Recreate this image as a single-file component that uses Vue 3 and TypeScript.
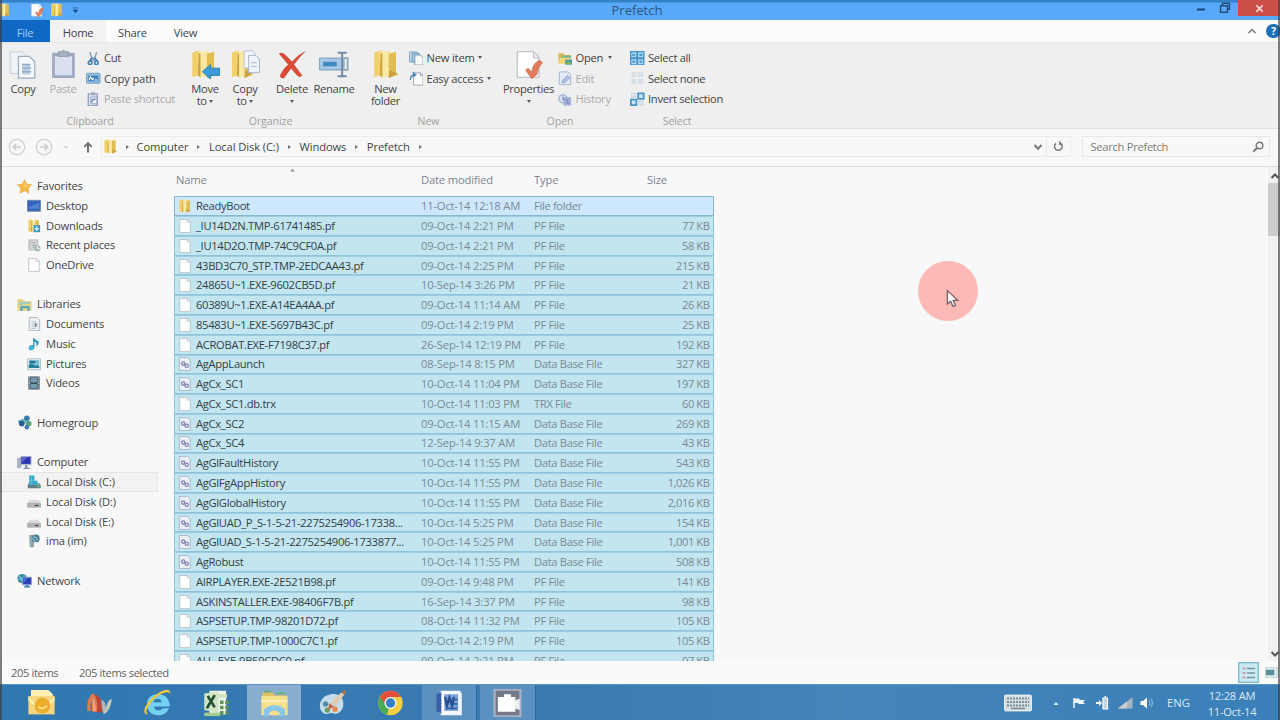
<script setup lang="ts">
interface FileRow {
  name: string
  date: string
  type: string
  size: string
  icon: string
}
interface SideItem {
  label: string
  icon: string
  level: number
  selected?: boolean
}
interface TaskItem {
  icon: string
  state?: string
}

const folder =
  '<path d="M2 3 10 0v27l-8 3z" fill="#f1cf69"/><path d="M8 2 20 1v27l-9 3-3-3z" fill="#fae9a4"/><path d="M18 4 26 2v23l3 2-11 4z" fill="#e3bd50"/><path d="M9 3 11 4v26l-3-2z" fill="#d0a63c"/><path d="m19 22 9 4-10 5z" fill="#c9a140"/>'

const icons: Record<string, string> = {
  folder: `<g transform="translate(1 0)">${folder}</g>`,
  page: '<path d="M4 1h17l7 6v24H4z" fill="#fff" stroke="#b3bcc5" stroke-width="1.800"/><path d="M21 1v6h7" fill="#eef1f6" stroke="#aab4be" stroke-width="1.400"/>',
  db: '<path d="M3 1h19l6 6v24H3z" fill="#eaf0f8" stroke="#9fabc0" stroke-width="1.800"/><g fill="none" stroke="#8683ad" stroke-width="3"><circle cx="12" cy="15" r="3.800"/><circle cx="20" cy="20" r="3.800"/></g>',
  copy: '<path d="M2 2h13l5 5v19H2z" fill="#eef3f8" stroke="#c2cdd8"/><path d="M11 7h12l6 6v18H11z" fill="#f5f8fc" stroke="#9aabbe" stroke-width="1.300"/><path d="M15 16h9v11h-9z" fill="#bdd1e3"/><path d="M15 16h9M15 20h10M15 24h10" stroke="#8fadc8" stroke-width="1.600"/>',
  paste: '<rect x="4" y="3" width="25" height="28" rx="1" fill="#9ea9c0"/><rect x="7" y="7" width="19" height="21" fill="#d9e0f0"/><path d="M11 2h3q2-3 5 0h3v5H11z" fill="#a7b2c6" stroke="#8996ab"/>',
  cut: '<path d="M9 2q0 9 10 20M23 2q0 9-10 20" stroke="#7f99b2" stroke-width="3" fill="none"/><path d="M13 15 8 23M19 15l6 8" stroke="#3f7fb6" stroke-width="4"/><circle cx="9" cy="26" r="4" fill="none" stroke="#3f7fb6" stroke-width="3.500"/><circle cx="23" cy="26" r="4" fill="none" stroke="#3f7fb6" stroke-width="3.500"/>',
  path: '<rect x="1" y="5" width="30" height="22" rx="2" fill="#9dbfe0" stroke="#6c9bc5" stroke-width="2"/><path d="M5 10h22v13H5z" fill="#4285bd"/><path d="m7 20 3-7 4 6 3-3M19 20h6" stroke="#fff" stroke-width="2.400" fill="none"/>',
  shortcut: '<path d="M5 4h20v26H5z" fill="#dde4ee" stroke="#94a2bd" stroke-width="3"/><path d="M11 1h9v6h-9z" fill="#98a6c2"/><path d="M11 11h13v15H11z" fill="#eef3fb" stroke="#909ebd" stroke-width="2"/><path d="M13 23q0-8 8-7" stroke="#5e82b3" stroke-width="3" fill="none"/>',
  moveto: `${folder}<path d="m13 24 9-8v4h10v8H22v4z" fill="#3c9bdb" stroke="#2c7fb8"/>`,
  copyto: `<g transform="scale(.86 1)">${folder}</g><path d="M15 1h9l3 3v16H15z" fill="#f2f5fb" stroke="#b2bccd"/><path d="M20 6h8l4 4v15H20z" fill="#eff4fa" stroke="#a4b2c6"/><path d="M23 14h6M23 18h6" stroke="#9ab0cb"/>`,
  delete: '<path d="M2 4q3-2 6 1l8 8Q22 6 30 2q-7 7-12 14l9 12q-3 3-6-1l-6-7q-4 5-8 11-4 0-4-3 3-7 9-12z" fill="#dd4b38" stroke="#c03d2e" stroke-width=".6"/>',
  rename: '<rect x="0" y="9" width="27" height="13" rx="1" fill="#a6c9e7" stroke="#84a5c8" stroke-width="1.400"/><path d="M4 13h15v5H4z" fill="#4288be"/><path d="M20 3h4l1 1 1-1h4M25 4v24M20 29h4l1-1 1 1h4" stroke="#728aa8" stroke-width="2.200" fill="none"/><path d="M27 9h4v13h-4" stroke="#91a3ba" fill="none" stroke-width="2"/>',
  newitem: '<path d="M1 2h17l5 5v17H1z" fill="#bad6e7" stroke="#7ca3bb" stroke-width="2"/><path d="M7 5h14v20H7z" fill="#9cc7df" stroke="#709eb9" stroke-width="2"/><path d="M13 9h12l6 6v16H13z" fill="#f7fafc" stroke="#8398aa" stroke-width="2"/>',
  easy: '<path d="M10 4h15l6 5v22H10z" fill="#fff" stroke="#9aa5af" stroke-width="2"/><path d="M25 4v6h5" fill="none" stroke="#8b98a4" stroke-width="2"/><path d="M3 20q0-12 10-12M8 3l7 5-7 5" fill="none" stroke="#4b8ab5" stroke-width="3"/>',
  props: '<path d="M3 2h18l6 6v22H3z" fill="#fff" stroke="#b4b8c2" stroke-width="1.200"/><path d="M21 2v7h6" fill="#eee" stroke="#b4b8c2"/><path d="m12 22 3-2 4 4q1-10 9-13l3 3q-5 5-6 13l-6 5z" fill="#e07b5a" stroke="#cb6c4e" stroke-width=".5"/>',
  open: '<path d="M1 5h11l3 4h14v18H1z" fill="#dbb957"/><path d="M8 10h21v12H8z" fill="#78b696"/><path d="M1 28 5 15h24l2 13z" fill="#f5d777"/><path d="M16 19h15v11H16z" fill="#4c95af"/><path d="m16 27 7-5 8 7H16z" fill="#79b966"/>',
  edit: '<path d="M3 2h19l6 6v22H3z" fill="#e3e9f5" stroke="#a2b1cf" stroke-width="2"/><path d="m10 21 11-11 5 5-11 11H9z" fill="#afc2e1" stroke="#8ba5ca" stroke-width="2"/>',
  history: '<circle cx="11" cy="15" r="9" fill="#dce3f2" stroke="#a9b5d7" stroke-width="3"/><path d="M12 11h17v19H12z" fill="#a4b3d9"/><path d="M11 10v7h6M20 16v8h5" fill="none" stroke="#7389bd" stroke-width="2.500"/>',
  selall: '<rect width="32" height="32" fill="#4591ca"/><path d="M3 3h11v11H3zM18 3h11v11H18zM3 18h11v11H3zM18 18h11v11H18z" fill="#b1d8f2"/><path d="M5 6h6v5H5zM21 6h6v5h-6zM5 21h6v5H5zM21 21h6v5h-6z" fill="#4e99d0"/>',
  selnone: '<path d="M4 3h9v9H4zM19 3h9v9h-9zM4 19h9v9H4zM19 19h9v9h-9z" fill="#dce2ec" stroke="#c6cfdc" stroke-width="2" stroke-dasharray="2 2"/>',
  invert: '<path d="M2 17h12v12H2zM18 3h12v12H18z" fill="#cae6f7" stroke="#4c95cb" stroke-width="4"/><path d="M3 3h9v9H3zM20 20h9v9h-9z" fill="#dce8f3" stroke="#b5cadb" stroke-width="1.500"/>',
  star: '<path d="m16 1 4.700 9.800 10.800 1.400-7.800 7.500 1.900 10.700L16 25.200l-9.600 5.200 1.900-10.700L.5 12.200l10.800-1.400z" fill="#f7b943" stroke="#df9c37"/><path d="m16 5 3 8 7 1-10 4z" fill="#fbd179"/>',
  desktop: '<path d="M1 3h30v25H1z" fill="#3567b2" stroke="#6887ae" stroke-width="2"/><path d="M4 6h24v16H4z" fill="#3864c1"/><path d="m4 18 24-9v13H4z" fill="#5282d1"/>',
  downloads: `<g transform="translate(1 0)">${folder}</g><path d="M15 14h15v16H15z" fill="#3595c6"/><path d="M22 16v9m-4-4 4 5 5-5" stroke="#c9edff" stroke-width="3" fill="none"/>`,
  recent: '<path d="M3 3h23v25H3z" fill="#c3c9cb"/><path d="m6 7 16-3 4 21-17 4z" fill="#dededc" stroke="#aaa"/><path d="M9 11h11M11 17h12M13 22h11" stroke="#8f989a" stroke-width="2"/><circle cx="24" cy="24" r="7" fill="#a9b9bc"/><path d="M24 19v5h5" stroke="#fff" stroke-width="2" fill="none"/>',
  libraries: '<path d="M1 5h11l3 4h16v20H1z" fill="#e3cf77"/><path d="M4 11h25v13H4z" fill="#9fcac4"/><path d="m2 18 28-4v15H2z" fill="#ead77e"/><path d="M7 19h20v11h-5v-6H12v6H7z" fill="#5ca7be"/>',
  document: '<path d="M5 1h18l6 6v24H5z" fill="#eef1f4" stroke="#a6afb8" stroke-width="2"/><path d="M10 11h12M10 16h14M10 21h14M10 26h10" stroke="#9da8b3" stroke-width="1.500"/><path d="m18 13 6 5-6 6z" fill="#7886a0"/>',
  music: '<path d="M16 2q3 6 11 8-1 9-6 11 3-8-4-10v14q-3 7-11 5-5-5 1-10 4-3 7-1V2z" fill="#2c94c7"/><ellipse cx="10" cy="25" rx="6" ry="4" fill="#4eb5dc"/>',
  pictures: '<path d="M1 4h30v25H1z" fill="#e6eff1" stroke="#92a9b5" stroke-width="1.500"/><path d="M4 7h24v18H4z" fill="#78bed3"/><path d="M4 19q7-8 12 0l12 1v5H4z" fill="#287c98"/><path d="M6 9h13v5H6z" fill="#34698f"/>',
  videos: '<path d="M3 1h26v30H3z" fill="#4f6475"/><path d="M9 4h14v24H9z" fill="#789caf"/><path d="M9 15h14v3H9z" fill="#293f51"/><path d="M6 3v26M26 3v26" stroke="#b6c6ce" stroke-width="2.500" stroke-dasharray="3 3"/>',
  homegroup: '<circle cx="21" cy="7" r="6" fill="#397bab"/><path d="M1 13 13 8l7 7-8 10z" fill="#62aab6"/><circle cx="10" cy="18" r="6" fill="#265d9d"/><circle cx="25" cy="18" r="6" fill="#54a375"/><circle cx="21" cy="26" r="5" fill="#4179b7"/>',
  computer: '<path d="M7 2h24v20H7z" fill="#b4bad0"/><path d="M9 4h20v15H9z" fill="#2e35b5"/><path d="m9 4 14 0-14 13z" fill="#5f68c9"/><path d="M1 7h7v20H1z" fill="#a9b6c5" stroke="#7786a1"/><path d="M17 22h5v5h5v3H14v-3h3z" fill="#7b8cad"/>',
  diskc: '<path d="M3 18h25l3 5v7H2v-7z" fill="#829fa6"/><path d="M2 23h29v7H2z" fill="#627d84"/><path d="M5 1h12v12h7v9H5z" fill="#35a9cc"/><path d="M10 2v20M5 12h12" stroke="#93dbea"/><circle cx="26" cy="26" r="2" fill="#5fe386"/>',
  disk: '<path d="M6 11h21l4 8v9H1v-9z" fill="#dcdcdc"/><path d="M1 19h30v9H1z" fill="#b3b6b8" stroke="#94989b"/><path d="M18 24h8" stroke="#444" stroke-width="3"/>',
  ima: '<path d="M5 2h16v7q-5 1-5 7v13q-6 4-10-1z" fill="#91a6b1"/><circle cx="20" cy="10" r="9" fill="#4e8397"/><path d="M15 6q7 0 9 8M12 10q6 2 6 8" stroke="#b2dae3" stroke-width="2" fill="none"/>',
  network: '<circle cx="11" cy="12" r="10" fill="#348ba7"/><path d="M4 7q6 1 7 13M3 14l16-5" stroke="#75cfda" stroke-width="2.500" fill="none"/><path d="M12 9h19v16H12z" fill="#2e41b5" stroke="#8fa2d3" stroke-width="2"/><path d="M14 11h9l-9 10z" fill="#4c77d6"/><path d="M18 26h7v2h3v3H15v-3h3z" fill="#3a7bb3"/>',
  outlook: '<path d="M4 1h20l5 5v21H4z" fill="#fff0b3"/><path d="M1 8h30v21H1z" fill="#f5d67c"/><path d="m1 9 15 13L31 9v4L16 26 1 13z" fill="#fff1ad"/><circle cx="17" cy="19" r="9" fill="#ecae2d"/><path d="M12 20q5 5 10-1" fill="none" stroke="#fce089" stroke-width="2"/>',
  aimp: '<path d="M2 25Q1 10 8 5q6 1 7 20-6 3-7 0-1-8-1-13-2 7-1 13z" fill="#df7a55"/><path d="M10 6q10 2 9 20l-6 1q2-13-3-21z" fill="#bd4534"/><path d="M8 9q4 6 4 16H8z" fill="#e9a27f"/><path d="M18 12q5 2 5 9 2-9 7-10-1 14-9 18-3-7-3-17z" fill="#a9b9bd"/><path d="M21 27q6-6 8-14" stroke="#d9d2a6" stroke-width="1.500" fill="none"/>',
  ie: '<path d="M16 6C7 6 4 12 4 18c0 7 5 12 13 12 6 0 10-3 12-8h-7c-2 3-9 4-10-2h18C30 11 25 6 16 6zm-5 9c1-5 9-5 10 0z" fill="#73d2f4"/><path d="M3 29C-4 24 8 10 18 4c8-5 13-4 13 2-3-6-15 1-21 8C5 20 1 26 5 28z" fill="#edc73d"/>',
  excel: '<path d="M8 2h19v27H8z" fill="#eef7e7"/><path d="M18 6h10v4H18z" fill="#cfe3c1"/><path d="M20 13h4v4h-4zM26 13h4v4h-4zM20 19h4v4h-4zM26 19h4v4h-4zM20 25h4v4h-4zM26 25h4v4h-4z" fill="#5f9457"/><path d="M2 5 18 3v24L2 24z" fill="#cfe5c6"/><path d="m6 8 8 13m0-14L5 22" stroke="#244f32" stroke-width="3"/><path d="M2 27h18v4H2z" fill="#a4cb90"/>',
  explorer: '<path d="M2 4h12l2 3h14v20H2z" fill="#dfc066"/><path d="M4 3h8M19 5h9" stroke="#66af73" stroke-width="2"/><path d="M1 8h30v22H1z" fill="#f6df8d"/><path d="M1 13h30v2H1z" fill="#fdf0b8"/><path d="M4 31v-8q12-9 24 0v8h-6v-4q-6-5-12 0v4z" fill="#87c7e7"/>',
  paint: '<path d="M14 6C2 8-2 21 5 27c5 4 8-1 12 1 7 2 13-6 11-14C27 8 21 5 14 6z" fill="#c6dceb"/><circle cx="8" cy="17" r="3" fill="#4b8eaf"/><circle cx="10" cy="24" r="3" fill="#58a56c"/><circle cx="19" cy="23" r="3" fill="#e58548"/><path d="m14 15 12-11 4 2-11 14z" fill="#e0cbb5"/><path d="m26 4 3-3 3 2-2 4z" fill="#a0745c"/><path d="m12 16 6 4-7 4z" fill="#c06a4a"/>',
  chrome: '<circle cx="16" cy="16" r="14" fill="#f5cf43"/><path d="m16 16-4 13.500A14 14 0 0 1 4 9z" fill="#4bac55"/><path d="M4 9 12 20l-2-5q1-6 6-6h12.200Q24 2 16 2 8 2 4 9z" fill="#e54d3c"/><circle cx="16" cy="16" r="7" fill="#e9f3f4"/><circle cx="16" cy="16" r="5.300" fill="#367fc4"/>',
  word: '<path d="M6 2h22l2 3v25H6z" fill="#f3f8ff"/><path d="M9 6h17v19H9z" fill="#7ea3d6"/><path d="M1 6 7 4v24l-6-3z" fill="#3a5fa6"/><path d="M7 3h3v26H7z" fill="#fff"/><path d="m11 9 2 10 3-9 3 9 2-10" stroke="#294e91" stroke-width="2.800" fill="none"/><path d="M19 12h6M20 17h5M12 22h13" stroke="#315f9b" stroke-width="2"/>',
  recorder: '<path d="M0 0h32v32H0z" fill="#a9b1c2"/><path d="M2.500 2h27v28h-27z" fill="#747989"/><path d="M5 9h7V6h8v3h5v17H5z" fill="#fff"/><path d="m24 13 6-2v13l-6-2z" fill="#eceff0"/>',
}

const sideItems: (SideItem | null)[] = [
  { label: 'Favorites', icon: 'star', level: 0 },
  { label: 'Desktop', icon: 'desktop', level: 1 },
  { label: 'Downloads', icon: 'downloads', level: 1 },
  { label: 'Recent places', icon: 'recent', level: 1 },
  { label: 'OneDrive', icon: 'page', level: 1 },
  null,
  { label: 'Libraries', icon: 'libraries', level: 0 },
  { label: 'Documents', icon: 'document', level: 1 },
  { label: 'Music', icon: 'music', level: 1 },
  { label: 'Pictures', icon: 'pictures', level: 1 },
  { label: 'Videos', icon: 'videos', level: 1 },
  null,
  { label: 'Homegroup', icon: 'homegroup', level: 0 },
  null,
  { label: 'Computer', icon: 'computer', level: 0 },
  { label: 'Local Disk (C:)', icon: 'diskc', level: 1, selected: true },
  { label: 'Local Disk (D:)', icon: 'disk', level: 1 },
  { label: 'Local Disk (E:)', icon: 'disk', level: 1 },
  { label: 'ima (im)', icon: 'ima', level: 1 },
  null,
  { label: 'Network', icon: 'network', level: 0 },
]

const row = (name: string, date: string, type: string, size: string): FileRow => ({
  name,
  date,
  type,
  size,
  icon: type === 'File folder' ? 'folder' : type === 'Data Base File' ? 'db' : 'page',
})
const PF = 'PF File'
const DB = 'Data Base File'
const files: FileRow[] = [
  row('ReadyBoot', '11-Oct-14 12:18 AM', 'File folder', ''),
  row('_IU14D2N.TMP-61741485.pf', '09-Oct-14 2:21 PM', PF, '77 KB'),
  row('_IU14D2O.TMP-74C9CF0A.pf', '09-Oct-14 2:21 PM', PF, '58 KB'),
  row('43BD3C70_STP.TMP-2EDCAA43.pf', '09-Oct-14 2:25 PM', PF, '215 KB'),
  row('24865U~1.EXE-9602CB5D.pf', '10-Sep-14 3:26 PM', PF, '21 KB'),
  row('60389U~1.EXE-A14EA4AA.pf', '09-Oct-14 11:14 AM', PF, '26 KB'),
  row('85483U~1.EXE-5697B43C.pf', '09-Oct-14 2:19 PM', PF, '25 KB'),
  row('ACROBAT.EXE-F7198C37.pf', '26-Sep-14 12:19 PM', PF, '192 KB'),
  row('AgAppLaunch', '08-Sep-14 8:15 PM', DB, '327 KB'),
  row('AgCx_SC1', '10-Oct-14 11:04 PM', DB, '197 KB'),
  row('AgCx_SC1.db.trx', '10-Oct-14 11:03 PM', 'TRX File', '60 KB'),
  row('AgCx_SC2', '09-Oct-14 11:15 AM', DB, '269 KB'),
  row('AgCx_SC4', '12-Sep-14 9:37 AM', DB, '43 KB'),
  row('AgGlFaultHistory', '10-Oct-14 11:55 PM', DB, '543 KB'),
  row('AgGlFgAppHistory', '10-Oct-14 11:55 PM', DB, '1,026 KB'),
  row('AgGlGlobalHistory', '10-Oct-14 11:55 PM', DB, '2,016 KB'),
  row('AgGlUAD_P_S-1-5-21-2275254906-17338...', '10-Oct-14 5:25 PM', DB, '154 KB'),
  row('AgGlUAD_S-1-5-21-2275254906-1733877...', '10-Oct-14 5:25 PM', DB, '1,001 KB'),
  row('AgRobust', '10-Oct-14 11:55 PM', DB, '508 KB'),
  row('AIRPLAYER.EXE-2E521B98.pf', '09-Oct-14 9:48 PM', PF, '141 KB'),
  row('ASKINSTALLER.EXE-98406F7B.pf', '16-Sep-14 3:37 PM', PF, '98 KB'),
  row('ASPSETUP.TMP-98201D72.pf', '08-Oct-14 11:32 PM', PF, '105 KB'),
  row('ASPSETUP.TMP-1000C7C1.pf', '09-Oct-14 2:19 PM', PF, '105 KB'),
  row('AU_.EXE-9B59CDC0.pf', '09-Oct-14 2:21 PM', PF, '97 KB'),
]

const crumbs = ['Computer', 'Local Disk (C:)', 'Windows', 'Prefetch']

const tasks: TaskItem[] = [
  { icon: 'outlook' },
  { icon: 'aimp' },
  { icon: 'ie' },
  { icon: 'excel' },
  { icon: 'explorer', state: 'active' },
  { icon: 'paint' },
  { icon: 'chrome' },
  { icon: 'word', state: 'open' },
  { icon: 'recorder', state: 'open' },
]
</script>

<template>
  <div class="screen">
    <header class="titlebar">
      <div class="quick">
        <svg class="q1" viewBox="0 0 32 32" v-html="icons.folder" />
        <svg class="q2" viewBox="0 0 32 32" v-html="icons.props" />
        <svg class="q3" viewBox="0 0 32 32" v-html="icons.folder" />
        <svg class="q4" viewBox="0 0 8 8"><path d="M1 1h6M1.500 3.500h5L4 6.500z" fill="#174d88" stroke="#174d88" stroke-width=".8" /></svg>
      </div>
      <div class="title">Prefetch</div>
      <div class="winbtns">
        <svg class="min" viewBox="0 0 10 10"><path d="M1 7.500h8" stroke="#174779" stroke-width="2" /></svg>
        <svg class="max" viewBox="0 0 12 12"><path d="M3.500 3V1.200h7v6H9M1.500 3.700h7v6.500h-7z" fill="none" stroke="#204b78" stroke-width="1.400" /></svg>
        <div class="close"><svg viewBox="0 0 10 10"><path d="m1.500 1.500 7 7m0-7-7 7" stroke="#f6dcda" stroke-width="1.700" /></svg></div>
      </div>
    </header>

    <nav class="tabs">
      <div class="tab file">File</div>
      <div class="tab home">Home</div>
      <div class="tab share">Share</div>
      <div class="tab view">View</div>
      <svg class="collapse" viewBox="0 0 10 8"><path d="M1.500 6 5 2.500 8.500 6" fill="none" stroke="#777" stroke-width="1.500" /></svg>
      <div class="help">?</div>
    </nav>

    <section class="ribbon">
      <div class="group clipboard">
        <div class="tools">
          <div class="big"><svg viewBox="0 0 32 32" v-html="icons.copy" /><span>Copy</span></div>
          <div class="big off"><svg viewBox="0 0 32 32" v-html="icons.paste" /><span>Paste</span></div>
          <div class="smalls">
            <div class="small"><svg viewBox="0 0 32 32" v-html="icons.cut" /><span>Cut</span></div>
            <div class="small path"><svg viewBox="0 0 32 32" v-html="icons.path" /><span>Copy path</span></div>
            <div class="small off"><svg viewBox="0 0 32 32" v-html="icons.shortcut" /><span>Paste shortcut</span></div>
          </div>
        </div>
        <div class="caption">Clipboard</div>
      </div>
      <div class="group organize">
        <div class="tools">
          <div class="big"><svg viewBox="0 0 32 32" v-html="icons.moveto" /><span>Move</span><span>to <i class="dd" /></span></div>
          <div class="big"><svg viewBox="0 0 32 32" v-html="icons.copyto" /><span>Copy</span><span>to <i class="dd" /></span></div>
          <div class="big del"><svg viewBox="0 0 32 32" v-html="icons.delete" /><span>Delete</span><span><i class="dd" /></span></div>
          <div class="big ren"><svg viewBox="0 0 32 32" v-html="icons.rename" /><span>Rename</span></div>
        </div>
        <div class="caption">Organize</div>
      </div>
      <div class="group new">
        <div class="tools">
          <div class="big"><svg viewBox="0 0 32 32" v-html="icons.folder" /><span>New</span><span>folder</span></div>
          <div class="smalls">
            <div class="small item"><svg viewBox="0 0 32 32" v-html="icons.newitem" /><span>New item</span><i class="dd" /></div>
            <div class="small"><svg viewBox="0 0 32 32" v-html="icons.easy" /><span>Easy access</span><i class="dd" /></div>
          </div>
        </div>
        <div class="caption">New</div>
      </div>
      <div class="group open">
        <div class="tools">
          <div class="big"><svg viewBox="0 0 32 32" v-html="icons.props" /><span>Properties</span><span><i class="dd" /></span></div>
          <div class="smalls">
            <div class="small"><svg viewBox="0 0 32 32" v-html="icons.open" /><span>Open</span><i class="dd wide" /></div>
            <div class="small off"><svg viewBox="0 0 32 32" v-html="icons.edit" /><span>Edit</span></div>
            <div class="small off"><svg viewBox="0 0 32 32" v-html="icons.history" /><span>History</span></div>
          </div>
        </div>
        <div class="caption">Open</div>
      </div>
      <div class="group select">
        <div class="tools">
          <div class="smalls">
            <div class="small"><svg viewBox="0 0 32 32" v-html="icons.selall" /><span>Select all</span></div>
            <div class="small"><svg viewBox="0 0 32 32" v-html="icons.selnone" /><span>Select none</span></div>
            <div class="small"><svg viewBox="0 0 32 32" v-html="icons.invert" /><span>Invert selection</span></div>
          </div>
        </div>
        <div class="caption">Select</div>
      </div>
    </section>

    <section class="address">
      <div class="arrows">
        <svg class="circ" viewBox="0 0 18 18"><circle cx="9" cy="9" r="7.700" fill="none" stroke="#d2d2d2" stroke-width="1.300" /><path d="M13 9H5.500M8.500 5.800 5.300 9l3.200 3.200" fill="none" stroke="#ccc" stroke-width="1.600" /></svg>
        <svg class="circ" viewBox="0 0 18 18"><circle cx="9" cy="9" r="7.700" fill="none" stroke="#d2d2d2" stroke-width="1.300" /><path d="M5 9h7.500M9.500 5.800 12.700 9l-3.200 3.200" fill="none" stroke="#ccc" stroke-width="1.600" /></svg>
        <svg class="hist" viewBox="0 0 6 6"><path d="M.5 2h5L3 4.500z" fill="#d0d0d0" /></svg>
        <svg class="up" viewBox="0 0 10 12"><path d="M5 11.500V2M1.300 5.800 5 2l3.700 3.800" fill="none" stroke="#6c6c6c" stroke-width="1.900" /></svg>
      </div>
      <div class="pathbox">
        <svg class="loc" viewBox="0 0 32 32" v-html="icons.folder" />
        <i class="sep first" />
        <template v-for="c in crumbs" :key="c">
          <span class="crumb">{{ c }}</span><i class="sep" />
        </template>
        <svg class="drop" viewBox="0 0 10 8"><path d="M1.500 2 5 5.700 8.500 2" fill="none" stroke="#777" stroke-width="2" /></svg>
        <div class="refresh"><svg viewBox="0 0 12 12"><path d="M8 2.300A4.200 4.200 0 1 1 3.300 2.600M7.400.3v3.200h3.200" fill="none" stroke="#777" stroke-width="1.500" /></svg></div>
      </div>
      <div class="search">
        <span>Search Prefetch</span>
        <svg viewBox="0 0 12 12"><circle cx="7.500" cy="4.500" r="3.300" fill="none" stroke="#777" stroke-width="1.400" /><path d="M5 7 1.300 10.700" stroke="#777" stroke-width="1.900" /></svg>
      </div>
    </section>

    <main class="body">
      <aside class="side">
        <div v-for="(s, i) in sideItems" :key="i" class="node" :class="{ child: s?.level === 1, sel: s?.selected }">
          <template v-if="s">
            <svg viewBox="0 0 32 32" v-html="icons[s.icon]" />
            <span>{{ s.label }}</span>
          </template>
        </div>
      </aside>
      <div class="list">
        <div class="head">
          <span class="c-name">Name</span>
          <span class="c-date">Date modified</span>
          <span class="c-type">Type</span>
          <span class="c-size">Size</span>
          <svg class="sort" viewBox="0 0 8 5"><path d="M1 4.500 4 1l3 3.500z" fill="#8b8f95" /></svg>
        </div>
        <div class="rows">
          <div v-for="(f, i) in files" :key="f.name" class="row" :class="{ focus: i === 0 }">
            <svg viewBox="0 0 32 32" v-html="icons[f.icon]" />
            <span class="name">{{ f.name }}</span>
            <span class="date">{{ f.date }}</span>
            <span class="type">{{ f.type }}</span>
            <span class="size">{{ f.size }}</span>
          </div>
        </div>
      </div>
      <div class="scroll">
        <svg viewBox="0 0 10 8"><path d="M1.500 6 5 2.500 8.500 6" fill="none" stroke="#555" stroke-width="2" /></svg>
        <div class="thumb" />
        <svg class="dn" viewBox="0 0 10 8"><path d="M1.500 2 5 5.500 8.500 2" fill="none" stroke="#555" stroke-width="2" /></svg>
      </div>
    </main>

    <footer class="status">
      <span class="count">205 items</span>
      <span class="chosen">205 items selected</span>
      <svg class="details" viewBox="0 0 21 21"><rect x=".7" y=".7" width="19.600" height="19.600" fill="#cbe9f2" stroke="#7fbccb" stroke-width="1.400" /><path d="M9 6.500h8M9 11h8M9 15.500h8" stroke="#7b929d" stroke-width="1.300" /><path d="M4.500 6.500h3M4.500 11h3M4.500 15.500h3" stroke="#c48a9a" stroke-width="1.600" /></svg>
      <svg class="thumbs" viewBox="0 0 14 12"><path d="M.5.500h13v11H.5z" fill="#dfecee" stroke="#bcd3d6" /><path d="M1 3h9v6H1z" fill="#5b8f98" /></svg>
    </footer>

    <footer class="taskbar">
      <div v-for="t in tasks" :key="t.icon" class="task" :class="t.state">
        <svg viewBox="0 0 32 32" v-html="icons[t.icon]" />
      </div>
      <div class="tray">
        <svg class="kb" viewBox="0 0 28 17"><rect x=".6" y=".6" width="26.800" height="15.800" rx="1" fill="#d6dde0" stroke="#edf3f6" /><path d="M3 4h22M3 7.500h22M3 11h22" stroke="#7b8f9b" stroke-width="2" stroke-dasharray="2 1" /><path d="M7 14h14" stroke="#7b8f9b" stroke-width="1.500" /></svg>
        <svg class="more" viewBox="0 0 8 6"><path d="M1.500 5 4 2l2.500 3z" fill="#d9edf9" /></svg>
        <svg class="flag" viewBox="0 0 14 14"><path d="M2 2v10" stroke="#fff" stroke-width="1.400" /><path d="M2 2.500h5l1 1.500h5l-2 2 2 2H7L6 7H2z" fill="#f1f6fa" /></svg>
        <svg class="power" viewBox="0 0 14 14"><path d="M8 2h4.500v11H8zM9.500.7H11" fill="#c3d2dc" stroke="#fff" stroke-width="1.200" /><path d="M1 6h3V4l3 3-3 3V8H1z" fill="#fff" /></svg>
        <svg class="signal" viewBox="0 0 15 12"><path d="M0 11.500 14.500 0v11.500z" fill="#a3b6c2" /><path d="M0 11.500 9 4.500v7z" fill="#c9cfd1" /></svg>
        <svg class="sound" viewBox="0 0 14 12"><path d="M.5 4H3l4-3.500v11L3 8H.5z" fill="#fff" /><path d="M9 3.500q2 2.500 0 5M11 2q3 4 0 8" fill="none" stroke="#8ab5d8" stroke-width="1.200" /></svg>
        <span class="lang">ENG</span>
        <div class="clock"><span>12:28 AM</span><span>11-Oct-14</span></div>
      </div>
    </footer>

    <div class="spot">
      <svg viewBox="0 0 14 20"><path d="M1.500 1.500v14.500l3.500-3 2.500 5.500 2.600-1.200-2.300-5.300h4.700z" fill="#fff" stroke="#7d6269" stroke-width="1.500" /></svg>
    </div>
    <div class="edge left" />
    <div class="edge right" />
  </div>
</template>

<style>
html,
body {
  margin: 0;
  overflow: hidden;
}
</style>

<style scoped>
.screen {
  position: relative;
  width: 1280px;
  height: 720px;
  overflow: hidden;
  display: flex;
  flex-direction: column;
  background: #f8f8f8;
  color: #444;
  font: 11.2px/14px 'Open Sans', 'Noto Sans', sans-serif;
  white-space: nowrap;
}
svg {
  display: block;
  flex: none;
}
.titlebar {
  height: 20px;
  flex: none;
  display: grid;
  grid-template-columns: 1fr auto 1fr;
  background: linear-gradient(#3482c6 0 2px, #59a9fb 3px);
}
.quick {
  display: flex;
  padding-top: 3px;
}
.quick svg {
  width: 14px;
  height: 14px;
}
.quick .q1 {
  margin-left: -3px;
}
.quick .q2 {
  margin-left: 19px;
}
.quick .q3 {
  margin-left: 6px;
}
.quick .q4 {
  width: 7px;
  height: 7px;
  margin: 4px 0 0 8px;
}
.title {
  font-size: 13px;
  line-height: 20px;
  color: #2c5680;
  margin-left: -6px;
}
.winbtns {
  display: flex;
  justify-content: flex-end;
}
.min {
  width: 10px;
  height: 10px;
  margin: 2px 13px 0 0;
}
.max {
  width: 12px;
  height: 12px;
  margin: 2px 7px 0 0;
}
.close {
  width: 42px;
  height: 16px;
  display: flex;
  align-items: center;
  justify-content: center;
  background: #cb4f49;
}
.close svg {
  width: 9px;
  height: 9px;
}
.tabs {
  height: 22px;
  flex: none;
  display: flex;
  background: #fbfbfb;
  line-height: 25px;
  letter-spacing: -0.25px;
}
.tab {
  text-align: center;
  box-sizing: border-box;
}
.file {
  width: 50px;
  background: #0e68c4;
  color: #a5cff8;
}
.home {
  width: 56px;
  background: #f2f2f2;
}
.share {
  width: 53px;
}
.view {
  width: 53px;
}
.collapse {
  width: 10px;
  height: 8px;
  margin: 7px 9px 0 auto;
}
.help {
  width: 15px;
  height: 14px;
  margin: 4px -1px 0 0;
  border-radius: 7px;
  background: #1c70b6;
  color: #fff;
  font-weight: 700;
  font-size: 10px;
  line-height: 14px;
  text-align: center;
}
.ribbon {
  height: 87px;
  flex: none;
  box-sizing: border-box;
  display: flex;
  background: #efefef;
  border-top: 1px solid #e8e8e8;
  border-bottom: 1px solid #e2e2e2;
  letter-spacing: -0.3px;
}
.group {
  display: flex;
  flex-direction: column;
}
.tools {
  display: flex;
  height: 70.5px;
}
.caption {
  text-align: center;
  color: #a0a0a0;
  line-height: 14px;
  font-size: 10.6px;
  letter-spacing: -0.1px;
}
.clipboard {
  width: 180px;
}
.organize {
  width: 181px;
}
.new {
  width: 135px;
}
.open {
  width: 128px;
}
.select {
  width: 106px;
}
.clipboard .tools {
  padding-left: 3px;
}
.organize .tools {
  padding-left: 5px;
}
.new .tools {
  padding-left: 4.5px;
}
.open .tools {
  padding-left: 7.5px;
}
.select .tools {
  padding-left: 3px;
}
.big {
  width: 40px;
  display: flex;
  flex-direction: column;
  align-items: center;
  padding-top: 7.4px;
  line-height: 12px;
}
.big svg {
  width: 30px;
  height: 29px;
  margin-bottom: 4px;
}
.open .big {
  width: 50px;
}
.big.del {
  width: 42px;
  margin-left: 6px;
}
.big.ren {
  width: 42px;
}
.smalls {
  padding: 4.5px 0 0 3px;
}
.open .smalls {
  padding-left: 4px;
}
.small {
  display: flex;
  align-items: center;
  gap: 3.5px;
  height: 20.7px;
}
.small.path {
  letter-spacing: -0.15px;
}
.small.item {
  letter-spacing: -0.2px;
}
.small svg {
  width: 14.5px;
  height: 14.5px;
}
.off {
  color: #ababab;
}
.dd {
  display: inline-block;
  border: 2.5px solid transparent;
  border-top: 3px solid #555;
  border-bottom: 0;
  vertical-align: 2px;
}
.small .dd.wide {
  margin-left: 1.5px;
}
.address {
  height: 38px;
  flex: none;
  box-sizing: border-box;
  display: flex;
  align-items: center;
  padding: 0 10px 2px 8px;
  border-bottom: 1.5px solid #dcdcdc;
}
.arrows {
  width: 93px;
  display: flex;
  align-items: center;
}
.circ {
  width: 18px;
  height: 18px;
  margin-right: 9px;
}
.hist {
  width: 6px;
  height: 6px;
  margin-left: 1px;
}
.up {
  width: 10px;
  height: 12px;
  margin-left: 14px;
}
.pathbox {
  width: 970px;
  height: 21px;
  box-sizing: border-box;
  display: flex;
  align-items: center;
  border: 1px solid #ececec;
  letter-spacing: -0.1px;
}
.loc {
  width: 15px;
  height: 15px;
  margin-left: 1px;
}
.sep {
  width: 0;
  border: 2.5px solid transparent;
  border-left: 3.5px solid #707070;
  border-right: 0;
  margin: 0 8.5px 0 9px;
}
.sep.first {
  margin: 0 8px 0 7.5px;
}
.drop {
  width: 10px;
  height: 8px;
  margin: 0 3px 0 auto;
}
.refresh {
  width: 23px;
  height: 19px;
  display: flex;
  align-items: center;
  justify-content: center;
  border-left: 1px solid #e8e8e8;
}
.refresh svg {
  width: 11px;
  height: 11px;
}
.search {
  margin-left: auto;
  width: 188px;
  height: 21px;
  box-sizing: border-box;
  padding: 0 5px 0 7.5px;
  display: flex;
  align-items: center;
  justify-content: space-between;
  border: 1px solid #e8e8e8;
  color: #7c7c7c;
  letter-spacing: -0.3px;
}
.search span {
  letter-spacing: -0.3px;
  font-size: 11.2px;
}
.search svg {
  width: 12px;
  height: 12px;
}
.body {
  height: 494px;
  flex: none;
  display: flex;
  overflow: hidden;
}
.side {
  width: 174px;
  padding-top: 9.2px;
  letter-spacing: -0.18px;
}
.node {
  height: 19.74px;
  box-sizing: border-box;
  display: flex;
  align-items: center;
  gap: 5px;
  padding-left: 17px;
}
.node.child {
  padding-left: 27px;
}
.node.child svg {
  width: 14px;
  height: 14px;
}
.node svg {
  width: 15px;
  height: 15px;
}
.node.sel {
  width: 158px;
  background: #f2f2f2;
  border: 1px solid #e6e6e6;
  padding-left: 26px;
}
.list {
  width: 540px;
  height: 494px;
  overflow: hidden;
}
.head {
  position: relative;
  height: 29.4px;
  box-sizing: border-box;
  padding-left: 2px;
  display: flex;
  line-height: 25px;
  color: #7b8593;
  letter-spacing: -0.15px;
}
.c-name {
  width: 245px;
}
.c-date {
  width: 113px;
}
.c-type {
  width: 113px;
}
.sort {
  position: absolute;
  left: 115px;
  top: 1px;
  width: 7px;
  height: 4px;
}
.row {
  height: 19.77px;
  box-sizing: border-box;
  display: flex;
  align-items: center;
  border: 1px solid #8fc3d9;
  border-top-color: #9dcce0;
  background: #c2e5f0;
  color: #7b8a94;
}
.row.focus {
  background: #cde8fc;
  border-color: #86b8d2;
}
.row svg {
  width: 14px;
  height: 14px;
  margin-left: 3px;
}
.row .name {
  width: 225px;
  margin-left: 4px;
  color: #333f46;
  letter-spacing: -0.31px;
}
.row .date {
  width: 113px;
  letter-spacing: -0.18px;
}
.row .type {
  width: 110px;
  letter-spacing: -0.34px;
}
.row .size {
  width: 65.5px;
  text-align: right;
  letter-spacing: -0.45px;
}
.scroll {
  margin-left: auto;
  width: 12px;
  display: flex;
  flex-direction: column;
  background: #f1f1f1;
}
.scroll svg {
  width: 10px;
  height: 8px;
  margin: 5px 0 3px 2px;
}
.scroll .thumb {
  height: 53px;
  background: #cdcdcd;
}
.scroll .dn {
  margin: auto 0 3px 2px;
}
.status {
  height: 23px;
  flex: none;
  display: flex;
  align-items: center;
  background: #fafafa;
  color: #626262;
  letter-spacing: -0.4px;
}
.count {
  width: 68px;
  padding-left: 11px;
}
.details {
  width: 21px;
  height: 21px;
  margin-left: auto;
}
.thumbs {
  width: 15px;
  height: 11px;
  margin: 0 1px 0 5px;
}
.taskbar {
  height: 36px;
  flex: none;
  box-sizing: border-box;
  display: flex;
  padding-left: 12px;
  background: linear-gradient(90deg, #3078b0, #3c7ab3 45%, #4484b9 65%, #3b80b9);
  border-top: 1px solid #5c94c4;
}
.task {
  width: 54.3px;
  margin: 0 2px;
  display: flex;
  align-items: center;
  justify-content: center;
}
.task svg {
  width: 29px;
  height: 28px;
}
.task.active {
  background: #88aecf;
}
.task.open {
  background: #5b91c0;
  box-shadow: 1px 0 0 #2e6799;
}
.tray {
  margin-left: auto;
  display: flex;
  align-items: center;
  color: #dcebf7;
}
.kb {
  width: 28px;
  height: 18px;
}
.more {
  width: 8px;
  height: 6px;
  margin-left: 20px;
}
.flag {
  width: 14px;
  height: 14px;
  margin-left: 12px;
}
.power {
  width: 14px;
  height: 14px;
  margin-left: 9px;
}
.signal {
  width: 15px;
  height: 12px;
  margin-left: 9px;
}
.sound {
  width: 14px;
  height: 12px;
  margin-left: 7px;
}
.lang {
  width: 24px;
  margin-left: 13px;
}
.clock {
  width: 82px;
  margin-right: 7px;
  display: flex;
  flex-direction: column;
  align-items: center;
  line-height: 16px;
  padding-top: 2px;
  letter-spacing: -0.25px;
}
.spot {
  position: absolute;
  left: 918px;
  top: 261px;
  width: 60px;
  height: 60px;
  border-radius: 50%;
  background: #fdb9b6;
}
.spot svg {
  width: 13px;
  height: 19px;
  margin: 28px 0 0 28px;
}
.edge {
  position: absolute;
  top: 0;
  bottom: 0;
  width: 2px;
  background: rgba(60, 60, 65, 0.65);
}
.edge.left {
  left: 0;
}
.edge.right {
  right: 0;
}
</style>
